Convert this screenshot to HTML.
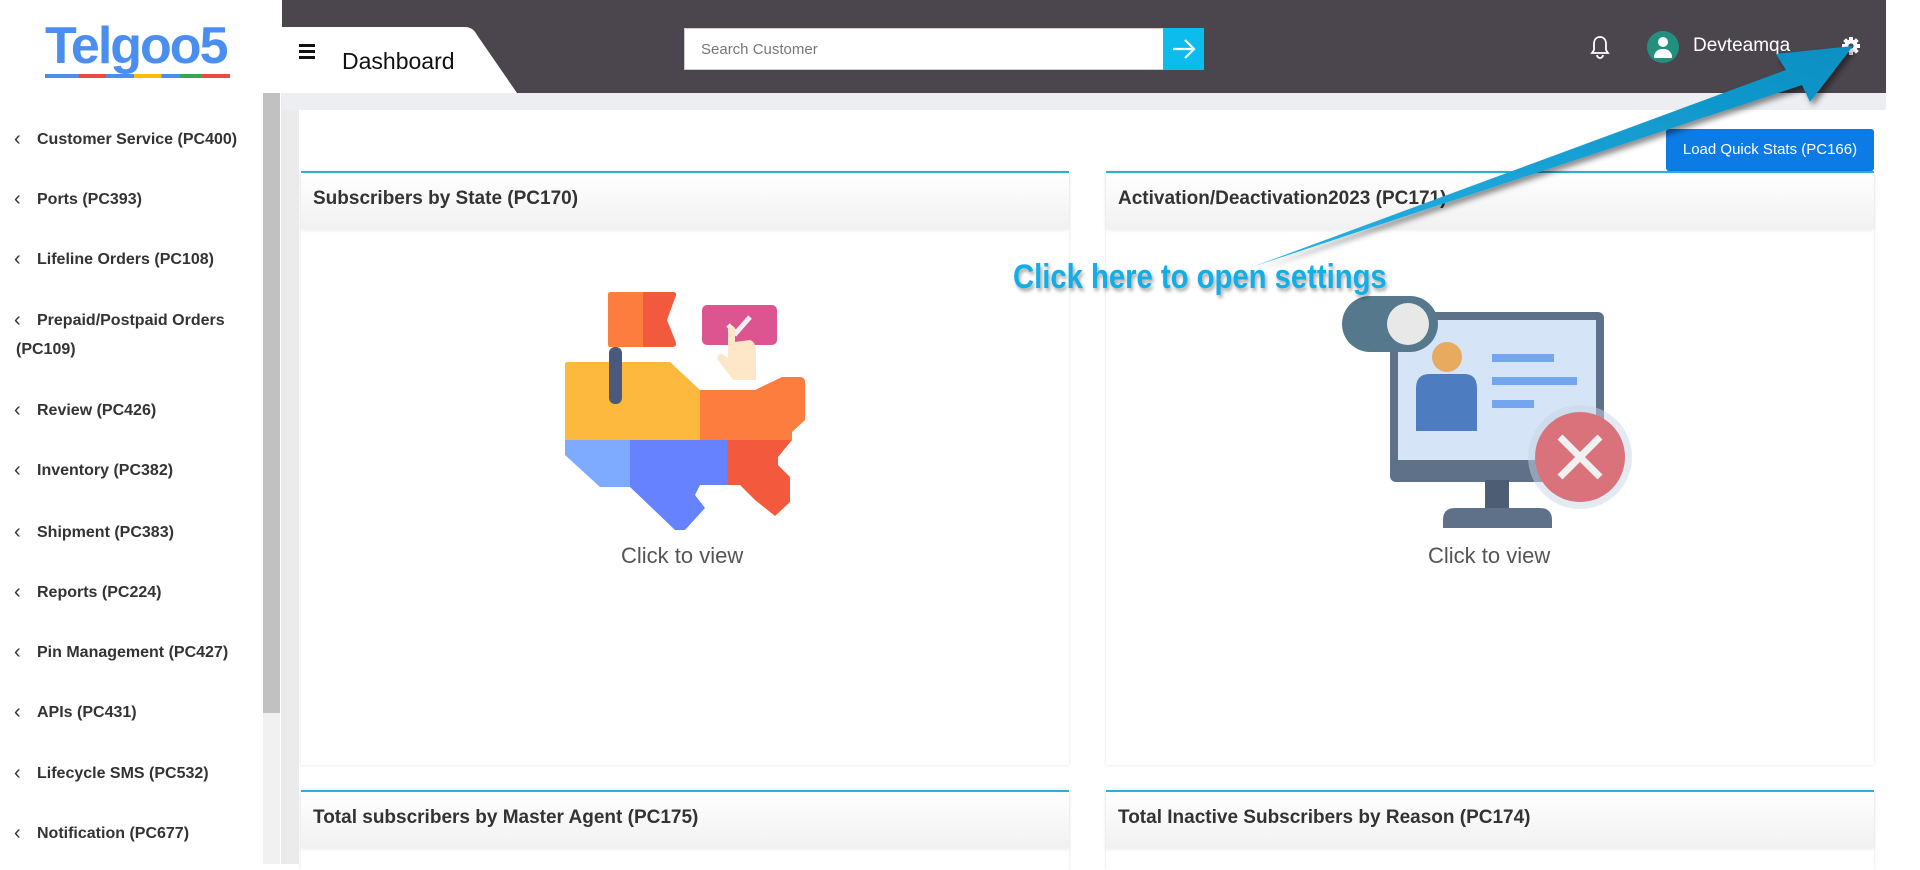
<!DOCTYPE html>
<html><head><meta charset="utf-8">
<style>
*{margin:0;padding:0;box-sizing:border-box}
body{width:1920px;height:864px;overflow:hidden;background:#fff;font-family:"Liberation Sans",sans-serif;position:relative}
.abs{position:absolute}
#top{left:282px;top:0;width:1604px;height:93px;background:#4b454e}
#strip{left:282px;top:93px;width:1604px;height:17px;background:#eceef2}
#tab{left:282px;top:27px}
.side{left:0;font-weight:bold;font-size:16px;color:#333}
.side .chev{position:absolute;left:14px;top:-3px;font-weight:normal;font-size:20px;color:#333}
.side span.t{position:absolute;left:37px;white-space:nowrap}
.panel{background:#fff;border-top:2px solid #29b0d8;box-shadow:0 0 3px rgba(0,0,0,.12)}
.ph{height:56px;background:linear-gradient(#fff,#f1f1f1);font-size:19px;font-weight:bold;color:#333;padding:15px 12px;box-shadow:0 2px 3px rgba(0,0,0,.06)}
.cv{font-size:22px;color:#555}
</style></head><body>

<div class="abs" style="left:45px;top:18px;font-size:52px;font-weight:bold;color:#4a8ff0;letter-spacing:-2px;line-height:56px">Telgoo5</div>
<div class="abs" style="left:45px;top:74px;height:4px;width:185px;background:linear-gradient(90deg,#4a8ff0 0 18%,#e94b3c 18% 33%,#4a8ff0 33% 48%,#fbbc05 48% 63%,#4a8ff0 63% 73%,#34a853 73% 85%,#e94b3c 85%)"></div>

<div class="abs" style="left:263px;top:93px;width:17px;height:771px;background:#f1f1f1"></div>
<div class="abs" style="left:263px;top:93px;width:17px;height:620px;background:#c1c1c1"></div>
<div class="abs" style="left:281px;top:93px;width:18px;height:771px;background:#ebebeb"></div>

<div class="abs side" style="top:131px"><span class="chev">&lsaquo;</span><span class="t">Customer Service (PC400)</span></div>
<div class="abs side" style="top:191px"><span class="chev">&lsaquo;</span><span class="t">Ports (PC393)</span></div>
<div class="abs side" style="top:251px"><span class="chev">&lsaquo;</span><span class="t">Lifeline Orders (PC108)</span></div>
<div class="abs side" style="top:312px"><span class="chev">&lsaquo;</span><span class="t">Prepaid/Postpaid Orders</span></div>
<div class="abs side" style="top:341px"><span class="t" style="left:16px">(PC109)</span></div>
<div class="abs side" style="top:402px"><span class="chev">&lsaquo;</span><span class="t">Review (PC426)</span></div>
<div class="abs side" style="top:462px"><span class="chev">&lsaquo;</span><span class="t">Inventory (PC382)</span></div>
<div class="abs side" style="top:524px"><span class="chev">&lsaquo;</span><span class="t">Shipment (PC383)</span></div>
<div class="abs side" style="top:584px"><span class="chev">&lsaquo;</span><span class="t">Reports (PC224)</span></div>
<div class="abs side" style="top:644px"><span class="chev">&lsaquo;</span><span class="t">Pin Management (PC427)</span></div>
<div class="abs side" style="top:704px"><span class="chev">&lsaquo;</span><span class="t">APIs (PC431)</span></div>
<div class="abs side" style="top:765px"><span class="chev">&lsaquo;</span><span class="t">Lifecycle SMS (PC532)</span></div>
<div class="abs side" style="top:825px"><span class="chev">&lsaquo;</span><span class="t">Notification (PC677)</span></div>

<div class="abs" id="top"></div>
<div class="abs" id="strip"></div>
<svg class="abs" id="tab" width="240" height="70"><path d="M0 0 H183 Q191 0 195 8 L235 66 H0 Z" fill="#fff"/></svg>
<div class="abs" style="left:299px;top:44px;width:16px;height:3px;background:#111;box-shadow:0 6px 0 #111,0 12px 0 #111"></div>
<div class="abs" style="left:342px;top:48px;font-size:23px;color:#111">Dashboard</div>

<div class="abs" style="left:684px;top:28px;width:480px;height:42px;background:#fff;border:1px solid #ccc;font-size:15px;color:#777;padding:12px 16px">Search Customer</div>
<div class="abs" style="left:1163px;top:28px;width:41px;height:42px;background:#0cbcec"></div>
<svg class="abs" style="left:1170px;top:35px" width="28" height="28"><path d="M3 14H24M15 5l9 9-9 9" stroke="#fff" stroke-width="2.2" fill="none"/></svg>

<svg class="abs" style="left:1589px;top:35px" width="22" height="24"><path d="M11 2c-4 0-6 3-6 7v6l-2 3h16l-2-3V9c0-4-2-7-6-7zM8 20a3 3 0 006 0" stroke="#fff" stroke-width="1.8" fill="none"/></svg>
<div class="abs" style="left:1647px;top:31px;width:32px;height:32px;border-radius:50%;background:#23907f;overflow:hidden"><div style="position:absolute;left:11px;top:6px;width:10px;height:10px;border-radius:50%;background:#fff"></div><div style="position:absolute;left:7px;top:18px;width:18px;height:9px;border-radius:8px 8px 1px 1px;background:#fff"></div></div>
<div class="abs" style="left:1693px;top:35px;font-size:19px;color:#fff">Devteamqa</div>
<svg class="abs" style="left:1841px;top:36px" width="20" height="20" viewBox="0 0 20 20"><g fill="#fff"><circle cx="10" cy="10" r="6.5"/><rect x="8" y="1" width="4" height="18"/><rect x="1" y="8" width="18" height="4"/><rect x="8" y="1" width="4" height="18" transform="rotate(45 10 10)"/><rect x="8" y="1" width="4" height="18" transform="rotate(-45 10 10)"/></g><circle cx="10" cy="10" r="2.6" fill="#4b454e"/></svg>

<div class="abs" style="left:1666px;top:129px;width:208px;height:42px;background:#0d7be6;border-radius:3px;color:#fff;font-size:15px;text-align:center;line-height:42px">Load Quick Stats (PC166)</div>

<div class="abs panel" style="left:301px;top:171px;width:768px;height:594px"><div class="ph">Subscribers by State (PC170)</div></div>
<div class="abs panel" style="left:1106px;top:171px;width:768px;height:594px"><div class="ph">Activation/Deactivation2023 (PC171)</div></div>
<div class="abs panel" style="left:301px;top:790px;width:768px;height:80px"><div class="ph">Total subscribers by Master Agent (PC175)</div></div>
<div class="abs panel" style="left:1106px;top:790px;width:768px;height:80px"><div class="ph">Total Inactive Subscribers by Reason (PC174)</div></div>

<svg class="abs" style="left:560px;top:280px" width="260" height="260" viewBox="0 0 260 260">
<path d="M5 84 Q5 82 8 82 H110 L140 110 V160 H5Z" fill="#fdb83e"/>
<path d="M140 110 H195 L222 97 H240 Q245 97 245 102 V140 L232 152 V160 H140Z" fill="#fd7d3e"/>
<path d="M5 160 H70 V207 H40 L5 175Z" fill="#7eaaff"/>
<path d="M70 160 H167 V205 H140 L135 215 L145 228 L125 250 L115 250 L70 207Z" fill="#6682fe"/>
<path d="M167 160 H232 L218 177 L218 185 L230 197 V222 L215 236 L195 220 L180 205 H167Z" fill="#f3593c"/>
<path d="M50 12 H83 V67 H50 Q48 67 48 64 V15 Q48 12 50 12Z" fill="#fd7d3e"/>
<path d="M83 12 H113 Q118 12 115 18 L107 40 L115 60 Q118 67 112 67 H83Z" fill="#f3593c"/>
<rect x="49" y="67" width="13" height="57" rx="6" fill="#4a5a7e"/>
<rect x="142" y="25" width="75" height="40" rx="5" fill="#dc5590"/>
<path d="M168 45 l8 8 l14-16" stroke="#f1f1f1" stroke-width="5" fill="none"/>
<path d="M168 48 Q172 44 175 48 V62 L190 60 Q196 62 196 72 V100 H173 L158 80 Q156 74 162 74 L168 78Z" fill="#fde7c8"/>
</svg>
<div class="abs cv" style="left:621px;top:543px">Click to view</div>

<svg class="abs" style="left:1330px;top:280px" width="320" height="260" viewBox="0 0 320 260">
<rect x="60" y="32" width="214" height="170" rx="6" fill="#5f7189"/>
<rect x="68" y="40" width="198" height="140" fill="#d5e4f7"/>
<rect x="155" y="200" width="24" height="30" fill="#4c5d74"/>
<path d="M113 240 Q113 228 125 228 H210 Q222 228 222 240 V248 H113Z" fill="#5f7189"/>
<rect x="12" y="16" width="96" height="56" rx="28" fill="#55788d"/>
<circle cx="78" cy="44" r="21" fill="#e8e8e8"/>
<circle cx="117" cy="77" r="15" fill="#e8aa5e"/>
<path d="M86 108 Q86 94 100 94 H134 Q147 94 147 108 V151 H86Z" fill="#4d7cc1"/>
<rect x="162" y="74" width="62" height="8" fill="#73a6ef"/>
<rect x="162" y="97" width="85" height="8" fill="#73a6ef"/>
<rect x="162" y="120" width="42" height="8" fill="#73a6ef"/>
<circle cx="250" cy="177" r="52" fill="#c8d6e6" opacity=".5"/>
<circle cx="250" cy="177" r="45" fill="#d9727a"/>
<path d="M230 157 L270 197 M270 157 L230 197" stroke="#f1f1f1" stroke-width="7"/>
</svg>
<div class="abs cv" style="left:1428px;top:543px">Click to view</div>

<svg class="abs" style="left:0;top:0" width="1920" height="864">
<defs><filter id="sh" x="-10%" y="-10%" width="120%" height="130%"><feDropShadow dx="3" dy="4" stdDeviation="3" flood-color="#000" flood-opacity=".45"/></filter>
<linearGradient id="ag" x1="0" y1="1" x2="1" y2="0"><stop offset="0" stop-color="#25b2e6"/><stop offset="1" stop-color="#0a8fc2"/></linearGradient></defs>
<polygon points="1252,267 1786,70 1776,54 1853,46 1810,102 1802,85" fill="url(#ag)" filter="url(#sh)"/>
</svg>
<div class="abs" style="left:1013px;top:258px;font-size:34px;font-weight:bold;color:#12aee8;transform:scaleX(0.86);transform-origin:left top;white-space:nowrap;text-shadow:2px 3px 4px rgba(0,0,0,.35)">Click here to open settings</div>

</body></html>
